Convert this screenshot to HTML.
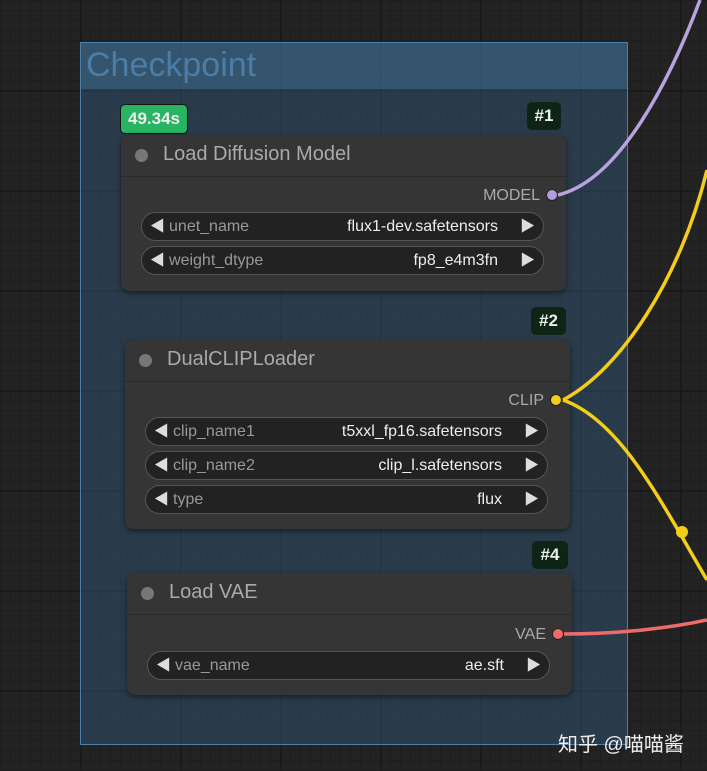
<!DOCTYPE html>
<html><head><meta charset="utf-8"><style>
*{margin:0;padding:0;box-sizing:border-box}
body{width:707px;height:771px;overflow:hidden;background:#232323;position:relative;font-family:"Liberation Sans","Noto Sans CJK SC",sans-serif;
background-image:linear-gradient(#1a1a1a 2px,transparent 2px),linear-gradient(90deg,#1a1a1a 2px,transparent 2px),linear-gradient(#1e1e1e 1px,transparent 1px),linear-gradient(90deg,#1e1e1e 1px,transparent 1px);
background-size:100px 100px,100px 100px,10px 10px,10px 10px;background-position:-20px -10px}
.grp{position:absolute;left:80px;top:42px;width:548px;height:703px;background:rgba(52,90,125,0.45);border:1px solid #4e7fa6}
.grph{position:absolute;left:0;top:0;right:0;height:46px;background:rgba(70,120,160,0.4)}
.grph span{position:absolute;left:5px;top:3px;font-size:34px;color:#4a7ea8}
.node{position:absolute;background:#353535;border-radius:8px;box-shadow:0 2px 6px rgba(0,0,0,.5)}
.tb{height:42px;border-bottom:1px solid #2a2a2a;position:relative;color:#aaa;font-size:20px}
.tb i{position:absolute;left:14px;top:14px;width:13px;height:13px;border-radius:50%;background:#777}
.tb span{position:absolute;left:42px;top:8px}
.out{position:absolute;right:8px;font-size:16px;color:#aaa}
.out b{display:inline-block;width:12px;height:12px;border-radius:50%;border:1.5px solid #222;vertical-align:-1px;margin-left:6px}
.w{position:absolute;left:20px;right:22px;height:29px;background:#222;border:1.5px solid #555;border-radius:15px;font-size:16px;color:#ddd;display:flex;align-items:center;padding:0 8px 0 8px}
.w .a{font-size:15px;color:#ddd;line-height:1}
.w .l{color:#999;margin-left:4px;flex:1}
.w .r{color:#eee;margin-right:22px}
.bd{position:absolute;background:#0e2414;color:#eee;font-weight:bold;font-size:17px;border-radius:5px;text-align:center;line-height:28px}
svg{z-index:5}
</style></head><body>
<div class="grp"><div class="grph"><span>Checkpoint</span></div></div>
<div class="bd" style="left:120px;top:104px;width:68px;background:#28b463;border:1px solid #111">49.34s</div>
<div class="bd" style="left:527px;top:102px;width:34px">#1</div>
<div class="node" style="left:121px;top:135px;width:445px;height:156px">
<div class="tb"><i></i><span>Load Diffusion Model</span></div>
<div class="out" style="top:52px">MODEL<b style="background:#b39ddb"></b></div>
<div class="w" style="top:77px"><span class="a">◀</span><span class="l">unet_name</span><span class="r">flux1-dev.safetensors</span><span class="a">▶</span></div>
<div class="w" style="top:111px"><span class="a">◀</span><span class="l">weight_dtype</span><span class="r">fp8_e4m3fn</span><span class="a">▶</span></div>
</div>
<div class="bd" style="left:531px;top:307px;width:35px">#2</div>
<div class="node" style="left:125px;top:340px;width:445px;height:189px">
<div class="tb"><i></i><span>DualCLIPLoader</span></div>
<div class="out" style="top:52px">CLIP<b style="background:#f3cd18"></b></div>
<div class="w" style="top:77px"><span class="a">◀</span><span class="l">clip_name1</span><span class="r">t5xxl_fp16.safetensors</span><span class="a">▶</span></div>
<div class="w" style="top:111px"><span class="a">◀</span><span class="l">clip_name2</span><span class="r">clip_l.safetensors</span><span class="a">▶</span></div>
<div class="w" style="top:145px"><span class="a">◀</span><span class="l">type</span><span class="r">flux</span><span class="a">▶</span></div>
</div>
<div class="bd" style="left:532px;top:541px;width:36px">#4</div>
<div class="node" style="left:127px;top:573px;width:445px;height:122px">
<div class="tb"><i></i><span>Load VAE</span></div>
<div class="out" style="top:53px">VAE<b style="background:#ee6b6b"></b></div>
<div class="w" style="top:78px"><span class="a">◀</span><span class="l">vae_name</span><span class="r">ae.sft</span><span class="a">▶</span></div>
</div>
<svg width="707" height="771" style="position:absolute;left:0;top:0">
<path d="M558 195 C620 180 670 80 700 0" stroke="#b8a2e0" stroke-width="3.5" fill="none"/>
<path d="M563 400 C620 370 680 280 707 170" stroke="#f3cd18" stroke-width="3.5" fill="none"/>
<path d="M563 400 C620 420 660 500 707 580" stroke="#f3cd18" stroke-width="3.5" fill="none"/>
<circle cx="682" cy="532" r="6" fill="#f3cd18"/>
<path d="M564 634 C620 634 670 628 707 620" stroke="#ee6b6b" stroke-width="3.5" fill="none"/>
</svg>
<div style="position:absolute;left:558px;top:728px;font-size:20px;color:#eee;font-family:'Liberation Sans','Noto Sans CJK SC',sans-serif;z-index:6">知乎 @喵喵酱</div>
</body></html>
